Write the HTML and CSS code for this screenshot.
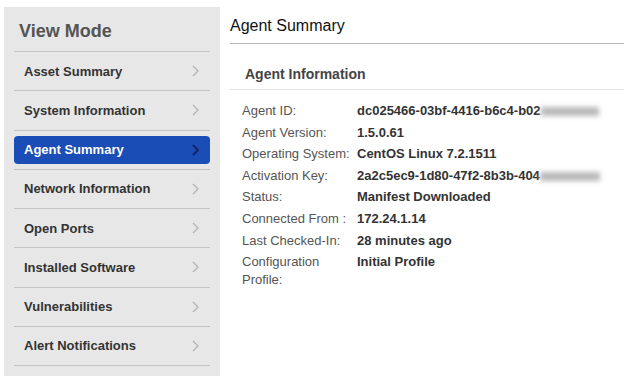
FILE: index.html
```html
<!DOCTYPE html>
<html lang="en">
<head>
    <meta charset="UTF-8">
    <title>Agent Summary</title>
    <link rel="stylesheet" href="styles.css">
</head>
<body>
    <div class="page">
        <div class="sidebar">
            <h2 class="sidebar-title">View Mode</h2>
            <ul class="nav">
                <li><a href="#">Asset Summary<svg class="chev" viewBox="0 0 7 12"><polyline points="1,1 6,6 1,11"/></svg></a></li>
                <li><a href="#">System Information<svg class="chev" viewBox="0 0 7 12"><polyline points="1,1 6,6 1,11"/></svg></a></li>
                <li><a href="#" class="active">Agent Summary<svg class="chev" viewBox="0 0 7 12"><polyline points="1,1 6,6 1,11"/></svg></a></li>
                <li><a href="#">Network Information<svg class="chev" viewBox="0 0 7 12"><polyline points="1,1 6,6 1,11"/></svg></a></li>
                <li><a href="#">Open Ports<svg class="chev" viewBox="0 0 7 12"><polyline points="1,1 6,6 1,11"/></svg></a></li>
                <li><a href="#">Installed Software<svg class="chev" viewBox="0 0 7 12"><polyline points="1,1 6,6 1,11"/></svg></a></li>
                <li><a href="#">Vulnerabilities<svg class="chev" viewBox="0 0 7 12"><polyline points="1,1 6,6 1,11"/></svg></a></li>
                <li><a href="#">Alert Notifications<svg class="chev" viewBox="0 0 7 12"><polyline points="1,1 6,6 1,11"/></svg></a></li>
            </ul>
        </div>

        <div class="main">
            <h1 class="page-title">Agent Summary</h1>
            <h3 class="section-title">Agent Information</h3>
            <dl class="info">
                <dt>Agent ID:</dt>
                <dd>dc025466-03bf-4416-b6c4-b02<span class="redact r1"></span></dd>
                <dt>Agent Version:</dt>
                <dd>1.5.0.61</dd>
                <dt>Operating System:</dt>
                <dd>CentOS Linux 7.2.1511</dd>
                <dt>Activation Key:</dt>
                <dd>2a2c5ec9-1d80-47f2-8b3b-404<span class="redact r2"></span></dd>
                <dt>Status:</dt>
                <dd>Manifest Downloaded</dd>
                <dt>Connected From :</dt>
                <dd>172.24.1.14</dd>
                <dt>Last Checked-In:</dt>
                <dd>28 minutes ago</dd>
                <dt>Configuration Profile:</dt>
                <dd>Initial Profile</dd>
            </dl>
        </div>
    </div>
</body>
</html>
```

FILE: styles.css
```css
body {
    margin: 0;
    font-family: "Liberation Sans", Arial, sans-serif;
    color: #333;
    background: #fff;
}
.page {
    display: flex;
    align-items: flex-start;
}
.sidebar {
    width: 196px;
    margin: 7px 0 0 4px;
    padding: 0 10px 12px;
    background-color: #e7e7e7;
}
.sidebar-title {
    margin: 0;
    height: 44px;
    line-height: 48px;
    padding-left: 5px;
    font-size: 18px;
    color: #545454;
    border-bottom: 1px solid #c4c4c4;
}
.nav {
    list-style: none;
    margin: 0;
    padding: 0;
}
.nav li {
    height: 38.25px;
    border-bottom: 1px solid #c4c4c4;
    display: flex;
    align-items: center;
}
.nav a {
    flex: 1;
    display: flex;
    align-items: center;
    justify-content: space-between;
    height: 28px;
    padding: 0 11px 0 10px;
    border-radius: 4px;
    font-size: 13px;
    font-weight: bold;
    color: #333;
    text-decoration: none;
}
.nav a.active {
    background-color: #1b4db7;
    color: #fff;
}
.chev {
    width: 7px;
    height: 12px;
    fill: none;
    stroke: #b4b4b4;
    stroke-width: 1.3;
}
.nav a.active .chev {
    stroke: #1a1f6e;
    stroke-width: 2;
}
.main {
    flex: 1;
    padding-left: 10px;
}
.page-title {
    margin: 0;
    padding-top: 17px;
    height: 26px;
    font-size: 16px;
    font-weight: normal;
    color: #111;
    border-bottom: 1px solid #b8b8b8;
}
.section-title {
    margin: 0;
    padding: 22px 0 0 15px;
    height: 23px;
    font-size: 14px;
    color: #444;
    border-bottom: 1px solid #e2e2e2;
}
.info {
    display: grid;
    grid-template-columns: 115px 1fr;
    row-gap: 3.6px;
    margin: 12px 0 0 12px;
    font-size: 13px;
    line-height: 18px;
}
.info dt {
    color: #555;
}
.info dd {
    margin: 0;
    font-weight: bold;
    color: #333;
}
.redact {
    display: inline-block;
    height: 9px;
    background-color: #b9b9b9;
    filter: blur(2.5px);
    vertical-align: middle;
}
.r1 { width: 58px; }
.r2 { width: 60px; }
```
